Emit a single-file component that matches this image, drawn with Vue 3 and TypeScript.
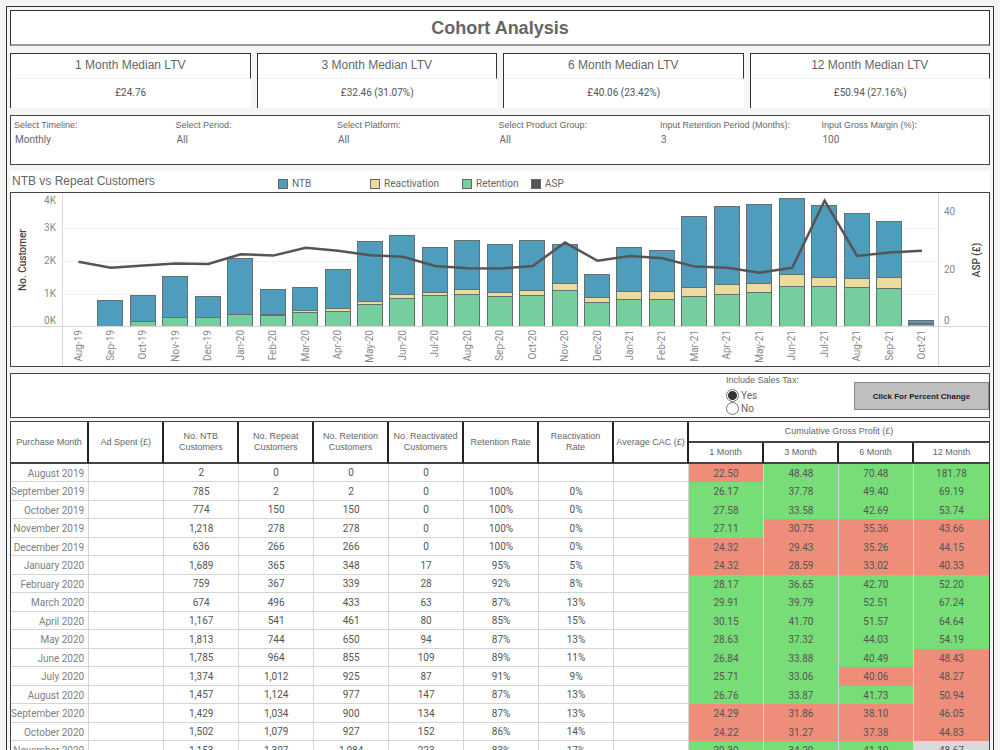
<script setup lang="ts">
import { ref } from 'vue'

interface Kpi { title: string; value: string }
interface Filter { id: string; label: string; value: string; kind: 'select' | 'input' }
interface Month { label: string; ntb: number; reactivation: number; retention: number; asp: number }
type Tone = 'good' | 'bad' | 'none'
interface Row { month: string; cells: string[]; profit: { value: string; tone: Tone }[] }

const kpis: Kpi[] = [
  { title: '1 Month Median LTV', value: '£24.76' },
  { title: '3 Month Median LTV', value: '£32.46 (31.07%)' },
  { title: '6 Month Median LTV', value: '£40.06 (23.42%)' },
  { title: '12 Month Median LTV', value: '£50.94 (27.16%)' },
]

const filters = ref<Filter[]>([
  { id: 'timeline', label: 'Select Timeline:', value: 'Monthly', kind: 'select' },
  { id: 'period', label: 'Select Period:', value: 'All', kind: 'select' },
  { id: 'platform', label: 'Select Platform:', value: 'All', kind: 'select' },
  { id: 'group', label: 'Select Product Group:', value: 'All', kind: 'select' },
  { id: 'retention', label: 'Input Retention Period (Months):', value: '3', kind: 'input' },
  { id: 'margin', label: 'Input Gross Margin (%):', value: '100', kind: 'input' },
])

const legend = [
  { name: 'NTB', key: 'ntb' },
  { name: 'Reactivation', key: 'rea' },
  { name: 'Retention', key: 'ret' },
  { name: 'ASP', key: 'asp' },
]

const salesTax = ref('Yes')

// label, NTB, reactivation, retention, ASP
const series: [string, number, number, number, number][] = [
  ['Aug-19', 2, 0, 0, 22.6],
  ['Sep-19', 785, 0, 2, 20.5],
  ['Oct-19', 774, 0, 150, 21.3],
  ['Nov-19', 1218, 0, 278, 22.0],
  ['Dec-19', 636, 0, 266, 21.8],
  ['Jan-20', 1689, 17, 348, 25.2],
  ['Feb-20', 759, 28, 339, 24.7],
  ['Mar-20', 674, 63, 433, 27.4],
  ['Apr-20', 1167, 80, 461, 26.4],
  ['May-20', 1813, 94, 650, 24.8],
  ['Jun-20', 1785, 109, 855, 24.3],
  ['Jul-20', 1374, 87, 925, 21.1],
  ['Aug-20', 1457, 147, 977, 20.3],
  ['Sep-20', 1429, 134, 900, 20.2],
  ['Oct-20', 1502, 152, 927, 21.1],
  ['Nov-20', 1153, 223, 1084, 29.2],
  ['Dec-20', 695, 151, 716, 22.9],
  ['Jan-21', 1313, 251, 806, 24.6],
  ['Feb-21', 1227, 242, 806, 23.8],
  ['Mar-21', 2145, 272, 906, 20.9],
  ['Apr-21', 2356, 312, 957, 20.5],
  ['May-21', 2377, 281, 1018, 18.8],
  ['Jun-21', 2295, 363, 1199, 20.5],
  ['Jul-21', 2165, 291, 1199, 43.7],
  ['Aug-21', 1953, 262, 1178, 24.6],
  ['Sep-21', 1701, 314, 1157, 25.8],
  ['Oct-21', 90, 22, 60, 26.4],
]
const months: Month[] = series.map(([label, ntb, reactivation, retention, asp]) => ({
  label, ntb, reactivation, retention, asp,
}))

const BASE = 134
const STEP = 32.44
const FIRST = 67.5
const BAR = 25
const perCustomer = 0.0332
const perPound = 2.89

const centre = (i: number) => FIRST + i * STEP
const yOf = (n: number) => Math.round(BASE - n * perCustomer)

const bars = months.slice(1).map((m, i) => {
  const x = Math.round(centre(i + 1) - BAR / 2) - 0.5
  const ret = yOf(m.retention)
  const rea = yOf(m.retention + m.reactivation)
  const top = yOf(m.retention + m.reactivation + m.ntb)
  return {
    x,
    parts: [
      { key: 'ntb', y: top, h: rea - top },
      { key: 'rea', y: rea, h: ret - rea },
      { key: 'ret', y: ret, h: BASE - ret },
    ].filter((p) => p.h > 0),
  }
})
const aspLine = months.map((m, i) => `${centre(i).toFixed(1)},${(BASE - m.asp * perPound).toFixed(1)}`).join(' ')

const leftTicks = [
  { text: '4K', y: 8 }, { text: '3K', y: 35 }, { text: '2K', y: 68 }, { text: '1K', y: 101 }, { text: '0K', y: 128 },
]
const rightTicks = [{ text: '40', y: 19 }, { text: '20', y: 77 }, { text: '0', y: 128 }]

const columns = [
  'Purchase Month', 'Ad Spent (£)', 'No. NTB\nCustomers', 'No. Repeat\nCustomers', 'No. Retention\nCustomers',
  'No. Reactivated\nCustomers', 'Retention Rate', 'Reactivation\nRate', 'Average CAC (£)',
]
const profitColumns = ['1 Month', '3 Month', '6 Month', '12 Month']

// g = above median, r = below median, n = neutral
const raw: [string, string, string, string][] = [
  ['August 2019', '2|0|0|0||', '22.50|48.48|70.48|181.78', 'rggg'],
  ['September 2019', '785|2|2|0|100%|0%', '26.17|37.78|49.40|69.19', 'gggg'],
  ['October 2019', '774|150|150|0|100%|0%', '27.58|33.58|42.69|53.74', 'gggg'],
  ['November 2019', '1,218|278|278|0|100%|0%', '27.11|30.75|35.36|43.66', 'grrr'],
  ['December 2019', '636|266|266|0|100%|0%', '24.32|29.43|35.26|44.15', 'rrrr'],
  ['January 2020', '1,689|365|348|17|95%|5%', '24.32|28.59|33.02|40.33', 'rrrr'],
  ['February 2020', '759|367|339|28|92%|8%', '28.17|36.65|42.70|52.20', 'gggg'],
  ['March 2020', '674|496|433|63|87%|13%', '29.91|39.79|52.51|67.24', 'gggg'],
  ['April 2020', '1,167|541|461|80|85%|15%', '30.15|41.70|51.57|64.64', 'gggg'],
  ['May 2020', '1,813|744|650|94|87%|13%', '28.63|37.32|44.03|54.19', 'gggg'],
  ['June 2020', '1,785|964|855|109|89%|11%', '26.84|33.88|40.49|48.43', 'gggr'],
  ['July 2020', '1,374|1,012|925|87|91%|9%', '25.71|33.06|40.06|48.27', 'ggrr'],
  ['August 2020', '1,457|1,124|977|147|87%|13%', '26.76|33.87|41.73|50.94', 'gggr'],
  ['September 2020', '1,429|1,034|900|134|87%|13%', '24.29|31.86|38.10|46.05', 'rrrr'],
  ['October 2020', '1,502|1,079|927|152|86%|14%', '24.22|31.27|37.38|44.83', 'rrrr'],
  ['November 2020', '1,153|1,307|1,084|223|83%|17%', '29.30|34.29|41.10|48.67', 'gggn'],
]
const tones: Record<string, Tone> = { g: 'good', r: 'bad', n: 'none' }
const rows: Row[] = raw.map(([month, cells, profit, marks]) => ({
  month,
  cells: ['', ...cells.split('|'), ''],
  profit: profit.split('|').map((value, i) => ({ value, tone: tones[marks[i]] })),
}))
</script>

<template>
  <main class="dashboard">
    <h1 class="title">Cohort Analysis</h1>

    <section class="kpis">
      <article v-for="k in kpis" :key="k.title" class="kpi">
        <h2>{{ k.title }}</h2>
        <p>{{ k.value }}</p>
      </article>
    </section>

    <form class="filters" @submit.prevent>
      <div v-for="f in filters" :key="f.id" class="filter">
        <label :for="f.id">{{ f.label }}</label>
        <select v-if="f.kind === 'select'" :id="f.id" v-model="f.value">
          <option>{{ f.value }}</option>
        </select>
        <input v-else :id="f.id" v-model="f.value" type="text" />
      </div>
    </form>

    <section class="chart">
      <header class="chart-head">
        <h2>NTB vs Repeat Customers</h2>
        <span v-for="l in legend" :key="l.key" class="legend">
          <i class="swatch" :class="l.key"></i>{{ l.name }}
        </span>
      </header>
      <div class="plot">
        <svg viewBox="0 0 978 173" role="img" aria-label="NTB vs Repeat Customers">
          <line v-for="y in [35, 68, 101]" :key="y" class="grid" x1="52" x2="927" :y1="y + 0.5" :y2="y + 0.5" />
          <line class="axis" x1="51.5" x2="51.5" y1="0" y2="173" />
          <line class="axis" x1="927.5" x2="927.5" y1="0" y2="173" />
          <g v-for="b in bars" :key="b.x">
            <rect
              v-for="p in b.parts"
              :key="p.key"
              class="bar"
              :class="p.key"
              :x="b.x"
              :y="p.y - 0.5"
              :width="BAR"
              :height="p.h"
            />
          </g>
          <line class="axis" x1="0" x2="978" :y1="BASE - 0.5" :y2="BASE - 0.5" />
          <polyline class="asp-line" :points="aspLine" />
          <text v-for="t in leftTicks" :key="t.text" class="tick" x="45" :y="t.y + 3" text-anchor="end">{{ t.text }}</text>
          <text v-for="t in rightTicks" :key="t.text" class="tick" x="933" :y="t.y + 3">{{ t.text }}</text>
          <text
            v-for="(m, i) in months"
            :key="m.label"
            class="tick"
            text-anchor="end"
            :transform="`translate(${Math.round(centre(i)) + 3} 137) rotate(-90)`"
          >{{ m.label }}</text>
          <text class="axis-title" text-anchor="middle" transform="translate(15 67) rotate(-90)">No. Customer</text>
          <text class="axis-title" text-anchor="middle" transform="translate(969 67) rotate(-90)">ASP (£)</text>
        </svg>
      </div>
    </section>

    <section class="options">
      <fieldset>
        <legend>Include Sales Tax:</legend>
        <label v-for="o in ['Yes', 'No']" :key="o">
          <input v-model="salesTax" type="radio" name="tax" :value="o" />{{ o }}
        </label>
      </fieldset>
      <button type="button">Click For Percent Change</button>
    </section>

    <table class="cohorts">
      <colgroup>
        <col class="first" />
        <col v-for="n in 12" :key="n" />
      </colgroup>
      <thead>
        <tr>
          <th v-for="c in columns" :key="c" scope="col" rowspan="2">{{ c }}</th>
          <th scope="colgroup" colspan="4" class="group">Cumulative Gross Profit (£)</th>
        </tr>
        <tr>
          <th v-for="c in profitColumns" :key="c" scope="col">{{ c }}</th>
        </tr>
      </thead>
      <tbody>
        <tr v-for="r in rows" :key="r.month">
          <th scope="row">{{ r.month }}</th>
          <td v-for="(c, i) in r.cells" :key="i">{{ c }}</td>
          <td v-for="(p, i) in r.profit" :key="'p' + i" class="profit" :class="p.tone">{{ p.value }}</td>
        </tr>
      </tbody>
    </table>
  </main>
</template>

<style>
body {
  background: #f5f5f5;
}
#app {
  height: 100vh;
  overflow: hidden;
}
</style>

<style scoped>
.dashboard {
  box-sizing: border-box;
  height: calc(100vh - 6px);
  margin: 6px 6px 0;
  padding: 3px 3px 0;
  overflow: hidden;
  border: 1px solid #333;
  border-bottom: 0;
  background: #f5f5f5;
  color: #666;
  font-family: "Liberation Sans", Arial, sans-serif;
  font-size: 9px;
}
h1, h2, p {
  margin: 0;
  font-weight: 400;
}
.title {
  padding: 6px 0 5px;
  border: 1px solid #333;
  border-bottom: 2px solid #999;
  background: #fff;
  font-size: 18px;
  font-weight: 700;
  line-height: 22px;
  text-align: center;
}
.kpis {
  display: grid;
  grid-template-columns: repeat(4, 1fr);
  gap: 6px;
  margin-top: 7px;
}
.kpi {
  border-left: 1px solid #333;
  background: #fff;
  text-align: center;
}
.kpi h2 {
  padding-bottom: 2px;
  border-top: 1px solid #333;
  border-right: 1px solid #333;
  border-bottom: 1px solid #f0f0f0;
  font-size: 12px;
  line-height: 22px;
}
.kpi p {
  padding-bottom: 1px;
  color: #555;
  font-family: Roboto, sans-serif;
  font-size: 10px;
  line-height: 28px;
}
.filters {
  display: grid;
  grid-template-columns: repeat(6, 1fr);
  margin-top: 7px;
  padding: 3px 6px 17px 3px;
  border: 1px solid #444;
  background: #fff;
}
.filter {
  display: flex;
  flex-direction: column;
}
.filter label {
  line-height: 13px;
}
.filter select,
.filter input {
  appearance: none;
  box-sizing: border-box;
  width: 100%;
  height: 15px;
  margin: 0;
  padding: 0 1px;
  border: 0;
  background: transparent;
  color: #666;
  font-family: Roboto, sans-serif;
  font-size: 10px;
}
.chart {
  margin-top: 6px;
  background: #fff;
}
.chart-head {
  display: grid;
  grid-template-columns: 268fr 92fr 92fr 69fr 459fr;
  height: 21px;
}
.chart-head h2 {
  padding-left: 2px;
  font-size: 12px;
  line-height: 20px;
}
.legend {
  display: flex;
  align-items: center;
  gap: 4px;
  padding-top: 5px;
  font-family: Roboto, sans-serif;
  font-size: 10px;
  line-height: 16px;
}
.swatch {
  box-sizing: border-box;
  width: 10px;
  height: 10px;
  border: 1px solid #666;
}
.swatch.ntb { background: #4e9dbc; }
.swatch.rea { background: #ecdb9f; }
.swatch.ret { background: #76ce9f; }
.swatch.asp { background: #555; }
.plot {
  border: 1px solid #444;
}
.plot svg {
  display: block;
  width: 100%;
  height: auto;
}
.grid { stroke: #f2f2f2; }
.axis { stroke: #d6d6d6; }
.bar { stroke: #66706f; }
.bar.ntb { fill: #4e9dbc; }
.bar.rea { fill: #ecdb9f; }
.bar.ret { fill: #76ce9f; }
.asp-line {
  fill: none;
  stroke: #555;
  stroke-width: 2.5;
}
.tick {
  fill: #888;
  font-family: Roboto, sans-serif;
  font-size: 10px;
}
.axis-title {
  fill: #444;
  font-family: Roboto, sans-serif;
  font-size: 10px;
  font-weight: 500;
}
.options {
  display: flex;
  justify-content: flex-end;
  align-items: flex-start;
  box-sizing: border-box;
  height: 45px;
  margin-top: 6px;
  border: 1px solid #444;
  background: #fff;
}
fieldset {
  display: flex;
  flex-direction: column;
  width: 128px;
  margin: 0;
  padding: 0;
  border: 0;
}
fieldset legend {
  padding: 0 0 3px;
  line-height: 12px;
}
fieldset label {
  display: flex;
  align-items: center;
  gap: 2px;
  height: 13px;
  font-family: Roboto, sans-serif;
  font-size: 10px;
}
fieldset input {
  appearance: none;
  box-sizing: border-box;
  width: 13px;
  height: 13px;
  margin: 0;
  border: 1px solid #777;
  border-radius: 50%;
  background: #fff;
}
fieldset input:checked {
  background: radial-gradient(circle, #333 0 4px, #fff 5px);
}
button {
  width: 135px;
  height: 28px;
  margin-top: 8px;
  padding: 0;
  border: 1px solid #888;
  border-radius: 0;
  background: #bfbfbf;
  color: #222;
  font-family: "Liberation Sans", Arial, sans-serif;
  font-size: 8px;
  font-weight: 700;
}
.cohorts {
  width: 100%;
  margin-top: 3px;
  table-layout: fixed;
  border-collapse: separate;
  border-spacing: 0;
  border: 1px solid #444;
  border-bottom: 0;
  background: #fff;
  text-align: center;
}
.first {
  width: 8%;
}
thead th {
  box-sizing: border-box;
  height: 21px;
  padding: 0;
  border-right: 2px solid #222;
  border-bottom: 2px solid #444;
  font-size: 9px;
  font-weight: 400;
  line-height: 11px;
  white-space: pre-line;
}
thead .group {
  border-right: 0;
}
thead tr:last-child th {
  height: 21px;
}
thead tr:last-child th:last-child {
  border-right: 0;
}
tbody tr {
  height: 18px;
}
tbody tr:nth-child(even) {
  height: 19px;
}
tbody th,
tbody td {
  padding: 1px 0 0;
  border-right: 1px solid #d4d4d4;
  border-bottom: 1px solid #d4d4d4;
  color: #555;
  font-family: Roboto, sans-serif;
  font-size: 10px;
  font-weight: 400;
  line-height: 12px;
}
tbody th {
  padding: 2px 4px 0 0;
  color: #808080;
  text-align: right;
  white-space: nowrap;
}
tbody .profit {
  border-bottom-width: 0;
}
tbody .profit:last-child {
  border-right: 0;
}
.good { background: #77dd77; }
.bad { background: #ee8d79; }
.none { background: #d9d9d9; }
</style>
